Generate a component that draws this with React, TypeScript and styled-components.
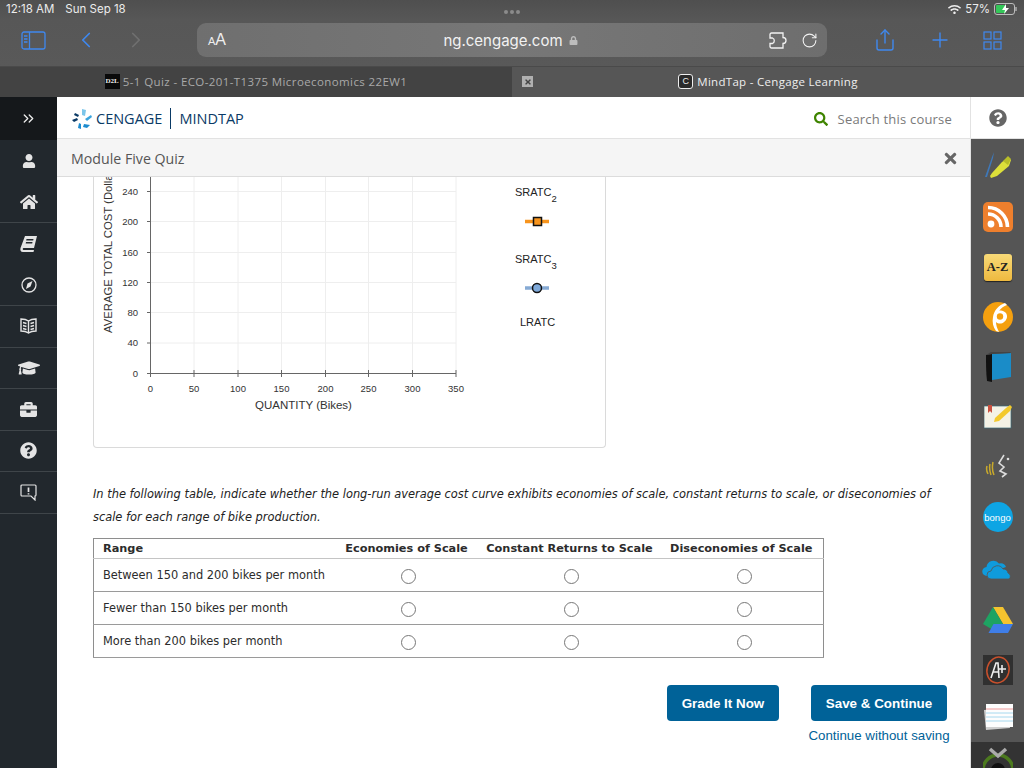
import React from 'react';
import styled, { createGlobalStyle } from 'styled-components';
import { ChevronLeft, ChevronRight, ChevronsRight, Plus, RotateCw, Share } from 'lucide-react';
import {
  FaBriefcase,
  FaGraduationCap,
  FaHome,
  FaLock,
  FaQuestionCircle,
  FaSearch,
  FaTimes,
  FaUser,
  FaWifi,
} from 'react-icons/fa';

const GlobalStyle = createGlobalStyle`
  html, body {
    margin: 0;
    padding: 0;
    background: #fff;
  }
  #root {
    width: 1024px;
    height: 768px;
    overflow: hidden;
  }
`;

const Page = styled.div`
  width: 1024px;
  height: 768px;
  display: flex;
  flex-direction: column;
  overflow: hidden;
  font-family: "Open Sans", "Liberation Sans", sans-serif;
`;

/* ---------- browser chrome ---------- */

const Chrome = styled.div`
  height: 66px;
  flex: none;
  background: linear-gradient(#4f4f4f, #575757 30%, #595959);
`;

const StatusBar = styled.div`
  height: 18px;
  display: grid;
  grid-template-columns: 1fr auto 1fr;
  align-items: center;
  padding: 0 6px;
  color: #ececec;
  font: 11.5px Inter, "Liberation Sans", sans-serif;
`;

const Clock = styled.div`
  display: flex;
  gap: 11px;
`;

const Dots = styled.div`
  display: flex;
  gap: 2px;
  margin-top: 5px;
`;

const Dot = styled.span`
  width: 4px;
  height: 4px;
  border-radius: 50%;
  background: #8b8b8b;
`;

const StatusRight = styled.div`
  display: flex;
  justify-content: flex-end;
  align-items: center;
  gap: 4px;
`;

const Toolbar = styled.div`
  height: 44px;
  display: flex;
  align-items: center;
`;

const LeftTools = styled.div`
  width: 197px;
  display: flex;
  align-items: center;
  padding-left: 21px;
  box-sizing: border-box;
`;

const UrlField = styled.div`
  width: 630px;
  height: 34px;
  flex: none;
  box-sizing: border-box;
  border-radius: 9px;
  background: linear-gradient(90deg, #6f6f6f, #777 50%, #6e6e6e);
  display: grid;
  grid-template-columns: 1fr auto 1fr;
  align-items: center;
  padding: 0 9px 0 11px;
  color: #f4f4f4;
`;

const TextSize = styled.div`
  font: 16px "Liberation Sans", sans-serif;
  color: #eee;
  & small {
    font-size: 11px;
  }
`;

const Domain = styled.div`
  display: flex;
  align-items: center;
  gap: 6px;
  font: 15px Inter, "Liberation Sans", sans-serif;
  color: #f2f2f2;
  padding-right: 5px;
  & svg {
    color: #bdbdbd;
  }
`;

const UrlActions = styled.div`
  display: flex;
  justify-content: flex-end;
  align-items: center;
  gap: 11px;
`;

const RightTools = styled.div`
  flex: 1;
  display: flex;
  align-items: center;
  gap: 31px;
  padding-left: 46px;
  color: #3f88ee;
`;

const Tabs = styled.div`
  height: 31px;
  flex: none;
  display: grid;
  grid-template-columns: 512px 512px;
`;

const Tab = styled.div<{ $active?: boolean }>`
  position: relative;
  display: flex;
  align-items: center;
  justify-content: center;
  gap: 3px;
  padding-bottom: 2px;
  letter-spacing: ${p => (p.$active ? '0.3px' : '0.4px')};
  font: 11.5px "Open Sans", "Liberation Sans", sans-serif;
  color: ${p => (p.$active ? '#eee' : '#a9a9a9')};
  background: ${p => (p.$active ? '#565656' : '#434343')};
  border-top: 1px solid #4a4a4a;
  box-sizing: border-box;
`;

const DlFavicon = styled.span`
  width: 15px;
  height: 15px;
  background: #0a0a0a;
  color: #eee;
  font: bold 7px "Liberation Serif", serif;
  letter-spacing: 0;
  display: flex;
  align-items: center;
  justify-content: center;
`;

const CFavicon = styled.span`
  width: 13px;
  height: 13px;
  border: 1px solid #eee;
  border-radius: 3px;
  background: #2a2a2a;
  color: #eee;
  font: 9px "Liberation Sans", sans-serif;
  letter-spacing: 0;
  display: flex;
  align-items: center;
  justify-content: center;
  margin-right: 1px;
`;

const TabClose = styled.span`
  position: absolute;
  left: 10px;
  top: 9px;
  width: 11px;
  height: 11px;
  background: #b0b0b0;
  color: #444;
  display: flex;
  align-items: center;
  justify-content: center;
`;

/* ---------- app shell ---------- */

const Body = styled.div`
  flex: 1;
  display: flex;
  min-height: 0;
`;

const NavRail = styled.nav`
  width: 57px;
  flex: none;
  background: #22282d;
  color: #e4e4e4;
`;

const RailToggle = styled.div`
  height: 43px;
  background: #15181b;
  display: flex;
  align-items: center;
  justify-content: center;
  color: #eee;
`;

const RailItem = styled.div<{ $divided?: boolean }>`
  height: 41.5px;
  display: flex;
  align-items: center;
  justify-content: center;
  box-sizing: border-box;
  border-bottom: ${p => (p.$divided ? '1px solid #3f4549' : 'none')};
`;

const Main = styled.div`
  flex: 1;
  min-width: 0;
  display: flex;
  flex-direction: column;
  background: #fff;
`;

const Header = styled.header`
  height: 39px;
  flex: none;
  display: flex;
  align-items: center;
  justify-content: space-between;
  padding: 2px 18px 0 14px;
  border-bottom: 1px solid #e2e2e2;
`;

const Brand = styled.div`
  display: flex;
  align-items: center;
  color: #0a3a66;
  font-size: 14.5px;
`;

const BrandDivider = styled.span`
  width: 1px;
  height: 21px;
  background: #0a3a66;
  margin: 0 8px;
`;

const Search = styled.div`
  display: flex;
  align-items: center;
  gap: 10px;
  color: #7a7a7a;
  font-size: 13px;
  letter-spacing: 0.2px;
  & svg {
    color: #3f8400;
  }
`;

const TitleBar = styled.div`
  height: 35px;
  flex: none;
  display: flex;
  align-items: center;
  justify-content: space-between;
  padding: 2px 11px 0 14px;
  background: #f5f5f5;
  border-bottom: 1px solid #dcdcdc;
  color: #555;
  font-size: 14.2px;
  & svg {
    color: #666;
  }
`;

const Content = styled.main`
  flex: 1;
  min-height: 0;
  padding-left: 36px;
  overflow: hidden;
`;

const ChartCard = styled.section`
  width: 513px;
  height: 271px;
  box-sizing: border-box;
  border: 1px solid #dadada;
  border-top: none;
  border-radius: 0 0 4px 4px;
  overflow: hidden;
`;

const ChartSvg = styled.svg`
  display: block;
  font-family: "Liberation Sans", sans-serif;
`;

const Question = styled.p`
  width: 860px;
  margin: 35px 0 9px;
  font: italic 11.42px/23px "DejaVu Sans", sans-serif;
  color: #222;
`;

const RangeTable = styled.table`
  width: 730px;
  border-collapse: collapse;
  table-layout: fixed;
  border: 1px solid #8e8e8e;
  font: 11.4px "DejaVu Sans", sans-serif;
  color: #2c2c2c;
`;

const HeadCell = styled.th<{ $first?: boolean }>`
  height: 19px;
  padding: 0 0 0 ${p => (p.$first ? '9px' : '0')};
  text-align: ${p => (p.$first ? 'left' : 'center')};
  font-size: 11.3px;
  font-weight: bold;
  white-space: nowrap;
  border-bottom: 1px solid #c4c4c4;
`;

const Row = styled.tr`
  height: 33px;
  border-bottom: 1px solid #9a9a9a;
`;

const RangeCell = styled.td`
  padding: 0 0 0 9px;
  white-space: nowrap;
`;

const ChoiceCell = styled.td<{ $shift: number }>`
  text-align: center;
  padding: 0 0 0 ${p => p.$shift}px;
`;

const Radio = styled.input.attrs({ type: 'radio' })`
  appearance: none;
  width: 15px;
  height: 15px;
  margin: 3px 0 0;
  background: #fff;
  border: 1px solid #777;
  border-radius: 50%;
  vertical-align: middle;
`;

const Actions = styled.div`
  display: flex;
  justify-content: flex-end;
  gap: 32px;
  margin-top: 27px;
  padding-right: 23px;
`;

const ActionColumn = styled.div`
  display: flex;
  flex-direction: column;
  align-items: center;
  gap: 6px;
`;

const ActionButton = styled.button<{ $width: number }>`
  width: ${p => p.$width}px;
  height: 36px;
  padding: 0;
  border: none;
  border-radius: 4px;
  background: #006298;
  color: #fff;
  font: bold 13.4px "Liberation Sans", sans-serif;
`;

const SkipLink = styled.a`
  margin: 0 -6px;
  color: #006298;
  font: 13.3px "Liberation Sans", sans-serif;
  white-space: nowrap;
  line-height: 18px;
`;

/* ---------- right rail ---------- */

const ToolRail = styled.aside`
  width: 54px;
  flex: none;
  display: flex;
  flex-direction: column;
  background: #555;
  border-left: 1px solid #e2e2e2;
  box-sizing: border-box;
`;

const HelpCell = styled.div`
  height: 42px;
  flex: none;
  background: #fff;
  display: flex;
  align-items: center;
  justify-content: center;
  color: #666;
  border-bottom: 1px solid #e2e2e2;
  box-sizing: border-box;
`;

const ToolList = styled.div`
  flex: 1;
  padding-top: 3px;
`;

const ToolSlot = styled.div<{ $nudge?: number }>`
  height: 50px;
  box-sizing: border-box;
  padding-top: ${p => p.$nudge ?? 0}px;
  display: flex;
  align-items: center;
  justify-content: center;
`;

const AzTile = styled.div`
  width: 28px;
  height: 27px;
  box-sizing: border-box;
  border-radius: 3px;
  background: linear-gradient(#f8da78, #eeb93f);
  box-shadow: 0 1px 1px #222;
  color: #222;
  font: bold 12.5px "Liberation Serif", serif;
  display: flex;
  align-items: center;
  justify-content: center;
`;

const BongoBadge = styled.div`
  width: 30px;
  height: 30px;
  border-radius: 50%;
  background: #0ea5e4;
  color: #fff;
  font: 9.5px "Liberation Sans", sans-serif;
  display: flex;
  align-items: center;
  justify-content: center;
`;

const ExpandCell = styled.div`
  height: 28px;
  flex: none;
  background: #333;
  display: flex;
  justify-content: center;
  overflow: hidden;
`;

/* ---------- drawings ---------- */

const SidebarIcon = () => (
  <svg width="25" height="19" viewBox="0 0 25 19" fill="none" stroke="#3f88ee" strokeWidth="1.3">
    <rect x="1" y="1" width="23" height="17" rx="2" />
    <path d="M8.5 1v17M3 5h3.5M3 8h3.5M3 11h3.5" />
  </svg>
);

const TabsIcon = () => (
  <svg width="19" height="19" viewBox="0 0 19 19" fill="none" stroke="#3f88ee" strokeWidth="1.2">
    <rect x="1" y="1" width="7" height="7" />
    <rect x="11" y="1" width="7" height="7" />
    <rect x="1" y="11" width="7" height="7" />
    <rect x="11" y="11" width="7" height="7" />
  </svg>
);

const PuzzleIcon = () => (
  <svg width="21" height="17" viewBox="0 0 21 17" fill="none" stroke="#f2f2f2" strokeWidth="1.3">
    <path d="M1 2.5A1.5 1.5 0 0 1 2.5 1H14v4.5a2.8 2.8 0 0 1 0 6V16H2.5A1.5 1.5 0 0 1 1 14.5v-3h2.5a3 3 0 0 0 0-5.5H1z" />
  </svg>
);

const Battery = () => (
  <svg width="24" height="12" viewBox="0 0 24 12">
    <rect x="0.5" y="0.5" width="20" height="11" rx="2.5" fill="none" stroke="#bbb" />
    <rect x="2" y="2" width="10" height="8" rx="1" fill="#34c759" />
    <path d="M22 4v4" stroke="#bbb" strokeWidth="1.3" />
    <path d="M12 1l-4 6h3l-1 4 5-6h-3z" fill="#fff" />
  </svg>
);

const CengageMark = () => (
  <svg width="22" height="22" viewBox="0 0 22 22" style={{ marginRight: 3 }}>
    <path d="M11 1l4 1-1 6-3-1z" fill="#7cc6ea" />
    <path d="M20 7l1 2-5 4-2-2z" fill="#3aa4dd" />
    <path d="M13 16l6 1-3 3-4-1z" fill="#1d8ccf" />
    <path d="M8 15l2 1 0 5-3-1z" fill="#1d8ccf" />
    <path d="M1 12l5-2 1 2-4 2z" fill="#0a3a66" />
    <path d="M4 5l4 2-1 2-4-2z" fill="#0a3a66" />
  </svg>
);

const SlantBook = () => (
  <svg width="17" height="16" viewBox="0 0 17 16" fill="#e4e4e4">
    <path d="M5 0h12l-3 12H3.5c-1 0-1 2 0 2H14l-.5 2H3C.5 16 0 14 .5 12zM6.5 3l-.3 1.5h7L13.5 3zM6 6l-.3 1.5h6.5L12.5 6z" fillRule="evenodd" />
  </svg>
);

const CompassIcon = () => (
  <svg width="16" height="16" viewBox="0 0 16 16">
    <circle cx="8" cy="8" r="7" fill="none" stroke="#e4e4e4" strokeWidth="1.3" />
    <path d="M11.5 4L9.5 9.5 5 12l1.5-5.5z" fill="#e4e4e4" />
  </svg>
);

const OpenBookIcon = () => (
  <svg width="17" height="16" viewBox="0 0 17 16" fill="none" stroke="#e4e4e4" strokeWidth="1.4">
    <path d="M8.5 3C6.5 1.5 3.5 1 1 1v12c2.5 0 5.5.5 7.5 2 2-1.5 5-2 7.5-2V1c-2.5 0-5.5.5-7.5 2zM8.5 3v12" />
    <path d="M3 4.5l3.5 1M3 7.5l3.5 1M3 10.5l3.5 1M14 4.5l-3.5 1M14 7.5l-3.5 1M14 10.5l-3.5 1" />
  </svg>
);

const FeedbackIcon = () => (
  <svg width="17" height="17" viewBox="0 0 17 17" fill="none" stroke="#e4e4e4" strokeWidth="1.2">
    <path d="M2 1h13a1 1 0 0 1 1 1v9a1 1 0 0 1-1 1v4l-4-4H2a1 1 0 0 1-1-1V2a1 1 0 0 1 1-1z" />
    <path d="M8.5 3.5v4.5M8.5 9.2v1.4" strokeWidth="1.7" />
  </svg>
);

const PenMarkerIcon = () => (
  <svg width="28" height="34" viewBox="0 0 28 34">
    <path d="M1 27L8 7l2-5-1 6-6 19z" fill="#3f78b8" />
    <path d="M7 28l-1-2 2-3 10-11 6-4 3 2-2 6-12 10z" fill="#dde03a" />
    <path d="M19 11l5-5 3 3-3 6z" fill="#b8bd28" />
  </svg>
);

const RssIcon = () => (
  <svg width="30" height="30" viewBox="0 0 30 30">
    <rect width="30" height="30" rx="5" fill="#ee7f2d" />
    <circle cx="8" cy="22" r="3.4" fill="#fff" />
    <path d="M5 12a13 13 0 0 1 13 13M5 5.5A19.5 19.5 0 0 1 24.5 25" fill="none" stroke="#fff" strokeWidth="3.6" />
  </svg>
);

const SixIcon = () => (
  <svg width="30" height="30" viewBox="0 0 30 30">
    <circle cx="15" cy="15" r="15" fill="#f5a00f" />
    <path d="M22 1c-6 2-11 7-12 14-1 5 0 10 3 14l3 1c-2-4-3-7-3-10 2 2 6 2 8 0 3-2 4-6 2-9-2-2-5-3-7-2 2-3 5-5 8-6z" fill="#fff" />
    <circle cx="17" cy="14.5" r="3.2" fill="#f5a00f" />
  </svg>
);

const BookIcon = () => (
  <svg width="26" height="30" viewBox="0 0 26 30">
    <path d="M1 3l6-1v28l-5-1c-1-8-1-18-1-26z" fill="#111" />
    <path d="M7 2l19-1v24L7 28z" fill="#1a8cc8" />
    <path d="M1 3l6-1 19-1-1-1H6z" fill="#444" />
  </svg>
);

const NoteIcon = () => (
  <svg width="28" height="24" viewBox="0 0 28 24">
    <rect y="1" width="27" height="22" fill="#f4f2e6" stroke="#3b6a78" strokeWidth="0.7" />
    <path d="M4 0h4v8L6 6 4 8z" fill="#c9503f" />
    <path d="M10 17l1-4L22 3l4-3 2 2-2 4-11 10z" fill="#f3c92c" />
  </svg>
);

const SoundIcon = () => (
  <svg width="26" height="28" viewBox="0 0 26 28" fill="none">
    <path d="M2 13c-1 3 0 6 1 8M5 11c-1 4 0 8 1 11M8 9c-1 5-1 9 1 13" stroke="#c8a92c" strokeWidth="1.5" />
    <path d="M19 2l-5 8 5 4-4 4 6 3-4 3" stroke="#ddd" strokeWidth="1.6" />
    <circle cx="23" cy="6" r="1.3" fill="#ddd" />
  </svg>
);

const CloudIcon = () => (
  <svg width="31" height="20" viewBox="0 0 31 20">
    <path d="M5 17a4.5 4.5 0 0 1-.5-9A7 7 0 0 1 17 4.5 6 6 0 0 1 24 8l-9 3-5 6z" fill="#0f9bdc" />
    <path d="M9 20a4 4 0 0 1 0-8 6.5 6.5 0 0 1 12-2 5 5 0 0 1 5 4 3.5 3.5 0 0 1 1 6z" fill="#0f9bdc" stroke="#555" strokeWidth="0.8" />
  </svg>
);

const DriveIcon = () => (
  <svg width="30" height="26" viewBox="0 0 30 26">
    <path d="M10 0h10l10 17H20z" fill="#f4c32f" />
    <path d="M10 0l10 17-5 9L0 17z" fill="#1ea362" />
    <path d="M5.5 26l5-9H30l-5 9z" fill="#3f7ee8" />
  </svg>
);

const GradeIcon = () => (
  <svg width="30" height="30" viewBox="0 0 30 30">
    <rect width="30" height="30" fill="#303030" />
    <ellipse cx="15" cy="15" rx="11" ry="13" fill="none" stroke="#c9502c" strokeWidth="1.5" transform="rotate(15 15 15)" />
    <path d="M8 23l5-15h2l1 15M10 17h6M19 10v8M16 14h7" fill="none" stroke="#eee" strokeWidth="1.6" />
  </svg>
);

const CardsIcon = () => (
  <svg width="30" height="26" viewBox="0 0 30 26">
    <path d="M1 6l24-2 2 20-24 2z" fill="#cfcfcf" />
    <rect x="3" width="27" height="23" fill="#fdfdfd" />
    <path d="M3 5h27" stroke="#ef9a9a" />
    <path d="M3 9h27M3 13h27M3 17h27" stroke="#a6d8ee" />
  </svg>
);

const ExpandIcon = () => (
  <svg width="30" height="28" viewBox="0 0 30 28">
    <circle cx="15" cy="28" r="15" fill="none" stroke="#4c7a1e" strokeWidth="3.5" />
    <circle cx="15" cy="28" r="7" fill="#111" />
    <path d="M7 7l8 7 8-7" fill="none" stroke="#aaa" strokeWidth="3.5" />
  </svg>
);

/* ---------- chart ---------- */

const xTicks = [
  { label: '0', x: 150.5 },
  { label: '50', x: 194 },
  { label: '100', x: 238 },
  { label: '150', x: 281.5 },
  { label: '200', x: 325.5 },
  { label: '250', x: 368.5 },
  { label: '300', x: 412.5 },
  { label: '350', x: 456 },
];

const yTicks = [
  { label: '0', y: 373.5 },
  { label: '40', y: 343 },
  { label: '80', y: 312.5 },
  { label: '120', y: 282.5 },
  { label: '160', y: 252.5 },
  { label: '200', y: 221.5 },
  { label: '240', y: 191.5 },
];

const CostChart = () => (
  <ChartSvg width="511" height="270" viewBox="94 177 511 270">
    {xTicks.slice(1).map(t => (
      <line key={t.label} x1={t.x} x2={t.x} y1="177" y2="373" stroke="#eee" />
    ))}
    {yTicks.slice(1).map(t => (
      <line key={t.label} x1="150" x2="456" y1={t.y} y2={t.y} stroke="#eee" />
    ))}
    <line x1="150.5" x2="150.5" y1="177" y2="374" stroke="#666" />
    <line x1="150" x2="456" y1="373.5" y2="373.5" stroke="#666" />
    {xTicks.map(t => (
      <g key={t.label}>
        <line x1={t.x} x2={t.x} y1="370" y2="377" stroke="#666" />
        <text x={t.x} y="392" fontSize="9.5" fill="#333" textAnchor="middle">{t.label}</text>
      </g>
    ))}
    {yTicks.map(t => (
      <g key={t.label}>
        <line x1="147" x2="150" y1={t.y} y2={t.y} stroke="#666" />
        <text x="138" y={t.y + 3} fontSize="9.5" fill="#333" textAnchor="end">{t.label}</text>
      </g>
    ))}
    <text x="303.5" y="408.5" fontSize="11.5" fill="#333" textAnchor="middle">QUANTITY (Bikes)</text>
    <text transform="translate(112 333) rotate(-90)" fontSize="11.3" fill="#333">AVERAGE TOTAL COST (Dollars per bike)</text>

    <text x="515" y="196" fontSize="11" fill="#222">SRATC<tspan dy="6" fontSize="9.5">2</tspan></text>
    <line x1="525" x2="549" y1="221.5" y2="221.5" stroke="#f7941d" strokeWidth="3.5" />
    <rect x="533.5" y="217.5" width="8" height="8" fill="#f7941d" stroke="#111" strokeWidth="1.5" />

    <text x="515" y="263" fontSize="11" fill="#222">SRATC<tspan dy="6" fontSize="9.5">3</tspan></text>
    <line x1="525" x2="549" y1="288" y2="288" stroke="#86aad4" strokeWidth="3.5" />
    <circle cx="537" cy="288" r="4.5" fill="#7ea9da" stroke="#111" strokeWidth="1.5" />

    <text x="537.5" y="326" fontSize="11" fill="#222" textAnchor="middle">LRATC</text>
  </ChartSvg>
);

const rows = [
  'Between 150 and 200 bikes per month',
  'Fewer than 150 bikes per month',
  'More than 200 bikes per month',
];

const App = () => (
  <Page>
    <GlobalStyle />
    <Chrome>
      <StatusBar>
        <Clock>
          <span>12:18 AM</span>
          <span>Sun Sep 18</span>
        </Clock>
        <Dots>
          <Dot />
          <Dot />
          <Dot />
        </Dots>
        <StatusRight>
          <FaWifi size={13} />
          <span>57%</span>
          <Battery />
        </StatusRight>
      </StatusBar>
      <Toolbar>
        <LeftTools>
          <SidebarIcon />
          <ChevronLeft size={26} color="#3f88ee" strokeWidth={1.6} style={{ marginLeft: 27 }} />
          <ChevronRight size={26} color="#707070" strokeWidth={1.6} style={{ marginLeft: 24 }} />
        </LeftTools>
        <UrlField>
          <TextSize><small>A</small>A</TextSize>
          <Domain>
            ng.cengage.com
            <FaLock size={9} />
          </Domain>
          <UrlActions>
            <PuzzleIcon />
            <RotateCw size={17} color="#f2f2f2" strokeWidth={1.5} />
          </UrlActions>
        </UrlField>
        <RightTools>
          <Share size={24} strokeWidth={1.4} />
          <Plus size={24} strokeWidth={1.4} />
          <TabsIcon />
        </RightTools>
      </Toolbar>
    </Chrome>
    <Tabs>
      <Tab>
        <DlFavicon>D2L</DlFavicon>
        5-1 Quiz - ECO-201-T1375 Microeconomics 22EW1
      </Tab>
      <Tab $active>
        <TabClose><FaTimes size={8} /></TabClose>
        <CFavicon>C</CFavicon>
        MindTap - Cengage Learning
      </Tab>
    </Tabs>
    <Body>
      <NavRail>
        <RailToggle><ChevronsRight size={17} strokeWidth={1.8} /></RailToggle>
        <RailItem><FaUser size={14} /></RailItem>
        <RailItem $divided><FaHome size={18} /></RailItem>
        <RailItem><SlantBook /></RailItem>
        <RailItem $divided><CompassIcon /></RailItem>
        <RailItem $divided><OpenBookIcon /></RailItem>
        <RailItem $divided><FaGraduationCap size={22} /></RailItem>
        <RailItem $divided><FaBriefcase size={17} /></RailItem>
        <RailItem $divided><FaQuestionCircle size={17} /></RailItem>
        <RailItem $divided><FeedbackIcon /></RailItem>
      </NavRail>
      <Main>
        <Header>
          <Brand>
            <CengageMark />
            CENGAGE
            <BrandDivider />
            MINDTAP
          </Brand>
          <Search>
            <FaSearch size={14} />
            Search this course
          </Search>
        </Header>
        <TitleBar>
          Module Five Quiz
          <FaTimes size={17} />
        </TitleBar>
        <Content>
          <ChartCard>
            <CostChart />
          </ChartCard>
          <Question>
            In the following table, indicate whether the long-run average cost curve exhibits economies of scale, constant returns to scale, or diseconomies of scale for each range of bike production.
          </Question>
          <RangeTable>
            <colgroup>
              <col width="240" />
              <col width="146" />
              <col width="180" />
              <col width="164" />
            </colgroup>
            <thead>
              <tr>
                <HeadCell $first>Range</HeadCell>
                <HeadCell>Economies of Scale</HeadCell>
                <HeadCell>Constant Returns to Scale</HeadCell>
                <HeadCell>Diseconomies of Scale</HeadCell>
              </tr>
            </thead>
            <tbody>
              {rows.map(r => (
                <Row key={r}>
                  <RangeCell>{r}</RangeCell>
                  <ChoiceCell $shift={3}><Radio name={r} /></ChoiceCell>
                  <ChoiceCell $shift={3}><Radio name={r} /></ChoiceCell>
                  <ChoiceCell $shift={7}><Radio name={r} /></ChoiceCell>
                </Row>
              ))}
            </tbody>
          </RangeTable>
          <Actions>
            <ActionColumn>
              <ActionButton $width={112}>Grade It Now</ActionButton>
            </ActionColumn>
            <ActionColumn>
              <ActionButton $width={136}>Save &amp; Continue</ActionButton>
              <SkipLink>Continue without saving</SkipLink>
            </ActionColumn>
          </Actions>
        </Content>
      </Main>
      <ToolRail>
        <HelpCell><FaQuestionCircle size={18} /></HelpCell>
        <ToolList>
          <ToolSlot><PenMarkerIcon /></ToolSlot>
          <ToolSlot><RssIcon /></ToolSlot>
          <ToolSlot><AzTile>A-Z</AzTile></ToolSlot>
          <ToolSlot><SixIcon /></ToolSlot>
          <ToolSlot><BookIcon /></ToolSlot>
          <ToolSlot><NoteIcon /></ToolSlot>
          <ToolSlot><SoundIcon /></ToolSlot>
          <ToolSlot><BongoBadge>bongo</BongoBadge></ToolSlot>
          <ToolSlot $nudge={4}><CloudIcon /></ToolSlot>
          <ToolSlot $nudge={6}><DriveIcon /></ToolSlot>
          <ToolSlot $nudge={6}><GradeIcon /></ToolSlot>
          <ToolSlot><CardsIcon /></ToolSlot>
        </ToolList>
        <ExpandCell><ExpandIcon /></ExpandCell>
      </ToolRail>
    </Body>
  </Page>
);

export default App;
